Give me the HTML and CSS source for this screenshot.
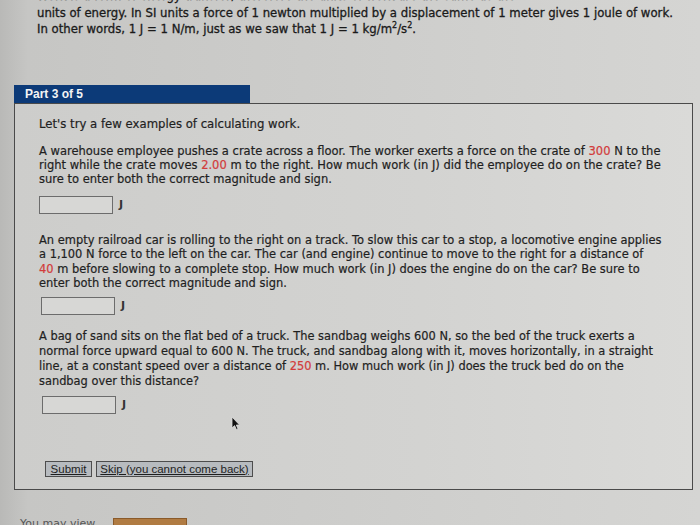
FILE: index.html
```html
<!DOCTYPE html>
<html lang="en">
<head>
    <meta charset="UTF-8">
    <title>Part 3 of 5</title>
    <link rel="stylesheet" href="styles.css">
</head>
<body>
    <div class="intro">
        Work is a form of energy transfer, therefore the units of work are the same as the<br>
        units of energy. In SI units a force of 1 newton multiplied by a displacement of 1 meter gives 1 joule of work.<br>
        In other words, 1 J = 1 N/m, just as we saw that 1 J = 1 kg/m<sup>2</sup>/s<sup>2</sup>.
    </div>

    <div class="part-tab">Part 3 of 5</div>
    <div class="part-box">
        <p class="lead">Let's try a few examples of calculating work.</p>

        <p class="q q1">A warehouse employee pushes a crate across a floor. The worker exerts a force on the crate of <span class="num">300</span> N to the<br>
        right while the crate moves <span class="num">2.00</span> m to the right. How much work (in J) did the employee do on the crate? Be<br>
        sure to enter both the correct magnitude and sign.</p>
        <div class="answer a1"><input type="text" class="box-input"><span class="unit">J</span></div>

        <p class="q q2">An empty railroad car is rolling to the right on a track. To slow this car to a stop, a locomotive engine applies<br>
        a 1,100 N force to the left on the car. The car (and engine) continue to move to the right for a distance of<br>
        <span class="num">40</span> m before slowing to a complete stop. How much work (in J) does the engine do on the car? Be sure to<br>
        enter both the correct magnitude and sign.</p>
        <div class="answer a2"><input type="text" class="box-input"><span class="unit">J</span></div>

        <p class="q q3">A bag of sand sits on the flat bed of a truck. The sandbag weighs 600 N, so the bed of the truck exerts a<br>
        normal force upward equal to 600 N. The truck, and sandbag along with it, moves horizontally, in a straight<br>
        line, at a constant speed over a distance of <span class="num">250</span> m. How much work (in J) does the truck bed do on the<br>
        sandbag over this distance?</p>
        <div class="answer a3"><input type="text" class="box-input"><span class="unit">J</span></div>

        <div class="buttons">
            <button class="btn btn-submit">Submit</button>
            <button class="btn btn-skip">Skip (you cannot come back)</button>
        </div>
    </div>

    <div class="footer-row">
        <span class="footer-text">You may view</span>
        <span class="footer-btn"></span>
    </div>

    <svg class="cursor" width="10" height="15" viewBox="0 0 10 15">
        <path d="M1 1 L1 12 L3.6 9.6 L5.4 13.6 L7 12.9 L5.3 9 L8.6 9 Z" fill="#111" stroke="#ddd" stroke-width="0.8"/>
    </svg>
</body>
</html>
```

FILE: styles.css
```css
body {
    margin: 0;
    height: 525px;
    overflow: hidden;
    font-family: "DejaVu Sans", Verdana, sans-serif;
    color: #222;
    background: linear-gradient(90deg, #b9b9b7 0%, #c6c6c4 4%, #cdcdcb 50%, #d5d5d3 100%);
    position: relative;
}
.intro {
    margin-top: -12px;
    padding-left: 37px;
    font-size: 11.7px;
    line-height: 16.5px;
    white-space: nowrap;
    color: #1a1a1a;
    -webkit-text-stroke: 0.3px #1a1a1a;
}
.intro sup {
    font-size: 8px;
    line-height: 0;
}
.part-tab {
    margin: 47px 0 0 14px;
    width: 236px;
    height: 18px;
    line-height: 18px;
    background-color: #0c3a78;
    color: #f4f4f4;
    font-family: "Liberation Sans", Arial, sans-serif;
    font-weight: bold;
    font-size: 12px;
    padding-left: 11px;
    box-sizing: border-box;
}
.part-box {
    margin-left: 14px;
    width: 679px;
    height: 387px;
    box-sizing: border-box;
    border: 1px solid #4a4a4a;
    padding: 13px 0 0 24px;
    background: linear-gradient(90deg, #cdcdcb 0%, #d3d3d1 60%, #dadad8 100%);
}
p {
    margin: 0;
    font-size: 11.5px;
    white-space: nowrap;
    color: #1f1f1f;
    -webkit-text-stroke: 0.2px #1f1f1f;
}
.lead {
    line-height: 15px;
    font-size: 11.7px;
}
.q1 {
    margin-top: 12px;
    line-height: 14px;
}
.q2 {
    margin-top: 19px;
    line-height: 14.5px;
    font-size: 11.45px;
}
.q3 {
    margin-top: 14px;
    line-height: 15px;
    font-size: 11.4px;
}
.num {
    color: #d23b3b;
    -webkit-text-stroke: 0.2px #d23b3b;
}
.answer {
    display: flex;
    align-items: center;
    gap: 6px;
}
.a1 {
    margin-top: 10px;
}
.a2 {
    margin-top: 6px;
    margin-left: 2px;
}
.a3 {
    margin-top: 7px;
    margin-left: 3px;
}
.box-input {
    width: 74px;
    height: 18px;
    box-sizing: border-box;
    border: 1px solid #6c6c6c;
    background-color: #d7d7d5;
    margin: 0;
    padding: 0;
}
.unit {
    font-size: 11px;
    font-weight: bold;
    color: #333;
}
.buttons {
    display: flex;
    gap: 4px;
    margin: 47px 0 0 6px;
}
.btn {
    height: 16px;
    padding: 0;
    font-family: "Liberation Sans", Arial, sans-serif;
    font-size: 11.5px;
    color: #1e1e1e;
    text-decoration: underline;
    background-color: #b7bbbf;
    border: 1px solid #4d4d4d;
    border-radius: 0;
    line-height: 14px;
}
.btn-submit {
    width: 47px;
}
.btn-skip {
    width: 157px;
}
.footer-row {
    display: flex;
    align-items: flex-start;
    gap: 8px;
    margin: 28px 0 0 20px;
}
.footer-text {
    font-size: 11px;
    color: #555;
    line-height: 12px;
    width: 85px;
}
.footer-btn {
    width: 72px;
    height: 10px;
    background-color: #b07b42;
    border: 1px solid #8a5a2a;
}
.cursor {
    position: absolute;
    left: 231px;
    top: 416px;
}
```
